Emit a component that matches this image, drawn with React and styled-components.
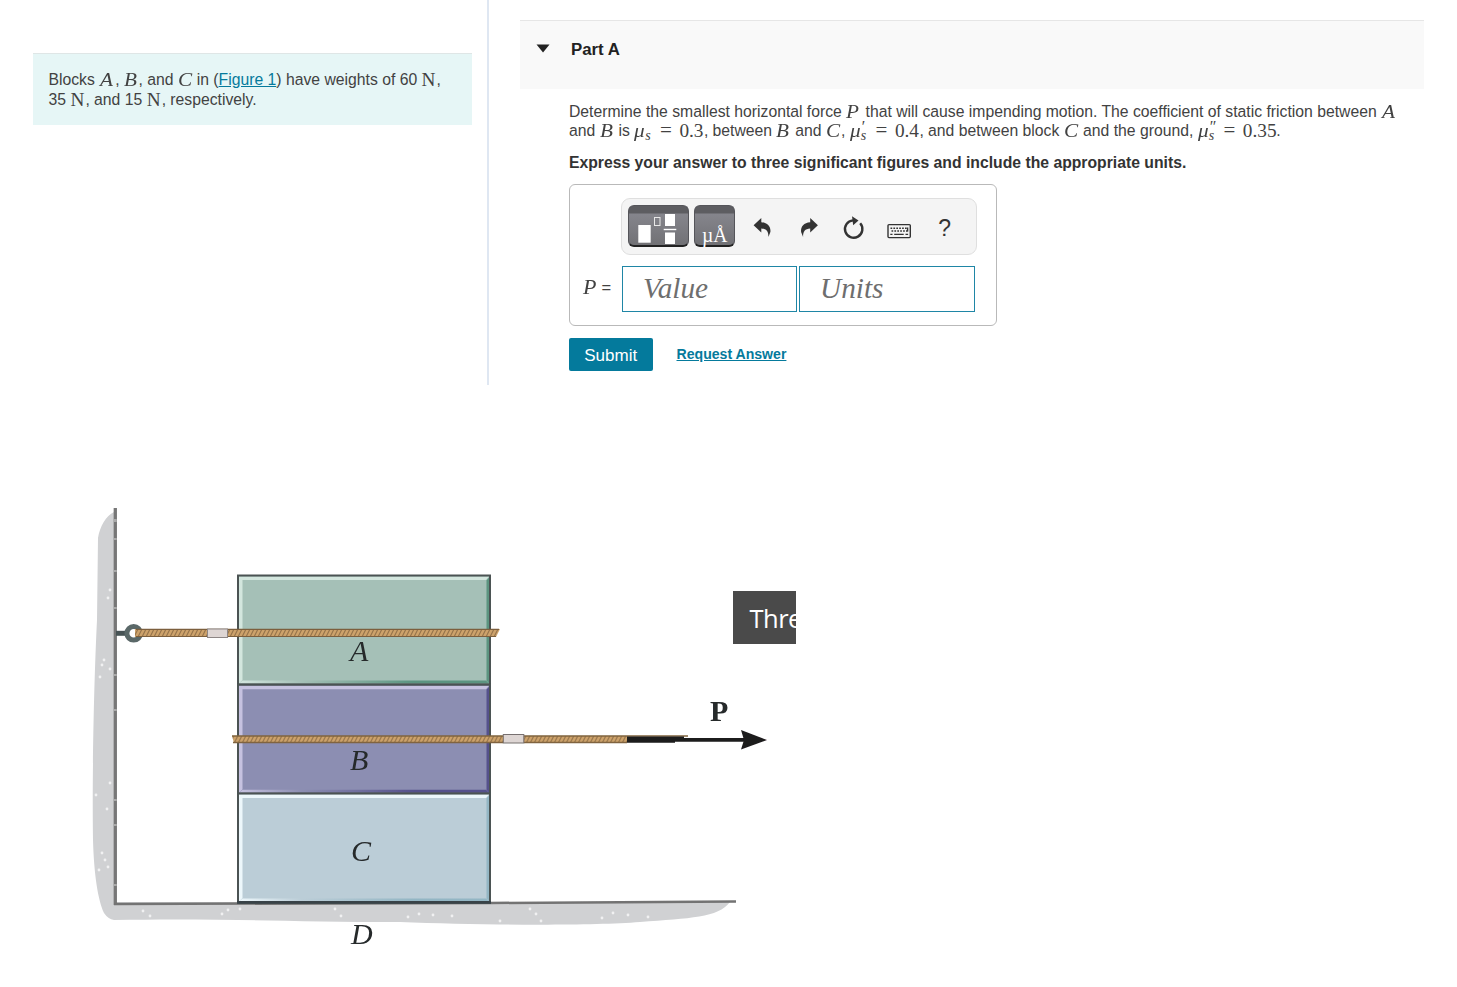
import React, { useState } from 'react';
import styled, { createGlobalStyle } from 'styled-components';

const GlobalStyle = createGlobalStyle`
  * {
    box-sizing: border-box;
  }
  body {
    margin: 0;
    background: #fff;
    font-family: "Liberation Sans", Arial, sans-serif;
    color: #424242;
  }
`;

const Page = styled.div`
  width: 1457px;
  height: 987px;
  display: flex;
  flex-direction: column;
  overflow: hidden;
`;

const Columns = styled.div`
  display: flex;
  height: 385px;
`;

const ProblemColumn = styled.aside`
  width: 489px;
  padding: 53px 15px 0 33px;
  border-right: 2px solid #dfe7f2;
`;

const ProblemCard = styled.div`
  height: 72px;
  padding: 16px 0 0 15.5px;
  background: #e6f6f6;
  border-top: 1px solid #dfe6e6;
`;

const TextLine = styled.p`
  margin: 0;
  height: 19.7px;
  line-height: 19.7px;
  font-size: 15.74px;
  white-space: nowrap;
`;

const Strong = styled(TextLine)`
  margin-top: 12.4px;
  font-weight: bold;
  color: #333;
`;

const Sym = styled.span`
  display: inline-block;
  width: ${props => props.$w}px;
  padding-left: ${props => props.$pad || 0}px;
  line-height: 0.8;
  vertical-align: -1px;
  font-family: "Liberation Serif", "Times New Roman", serif;
  font-size: ${props => props.$size || 19.3}px;
  font-style: ${props => (props.$upright ? 'normal' : 'italic')};
  transform: ${props => (props.$upright ? 'none' : 'scaleX(1.1)')};
  transform-origin: left;
`;

const Scripts = styled.span`
  display: inline-flex;
  flex-direction: column;
  width: 8.4px;
  vertical-align: 4px;
  font-family: "Liberation Serif", "Times New Roman", serif;
  font-style: italic;
  font-size: 14px;
  line-height: 9px;
`;

const Prime = styled.span`
  font-size: 16px;
  line-height: 8px;
`;

const Link = styled.a`
  color: #057a9c;
  text-decoration: underline;
  cursor: pointer;
`;

const PartColumn = styled.main`
  width: 935px;
  padding: 20px 0 0 31px;
`;

const PartHeader = styled.header`
  display: flex;
  align-items: flex-start;
  height: 69px;
  padding: 19px 0 0 16px;
  background: #f9f9f9;
  border-top: 1px solid #e6e6e6;
`;

const PartTitle = styled.h2`
  margin: 0 0 0 21px;
  font-size: 16.8px;
  line-height: 20px;
  color: #222;
`;

const Caret = styled.svg`
  width: 14px;
  height: 9px;
  margin-top: 4px;
`;

const PartBody = styled.div`
  padding: 12.6px 0 0 49px;
`;

const AnswerBox = styled.div`
  width: 428px;
  height: 142px;
  margin-top: 11px;
  padding: 13px 19px 0 13px;
  border: 1px solid #b9b9b9;
  border-radius: 6px;
`;

const Toolbar = styled.div`
  display: flex;
  align-items: flex-start;
  width: 356px;
  height: 57px;
  margin-left: 38px;
  padding: 6px 0 0 6px;
  background: #f4f4f4;
  border: 1px solid #dfdfdf;
  border-radius: 9px;
`;

const PaletteButton = styled.button`
  flex: none;
  width: ${props => props.$w}px;
  height: 42px;
  margin-right: 5px;
  padding: 0;
  border: 1px solid #55555a;
  border-bottom: 2px solid #222;
  border-radius: 6px;
  background: linear-gradient(#5d5d61 0 7px, #85858c 8px, #717175 100%);
`;

const IconButton = styled.button`
  flex: none;
  width: 46px;
  height: 42px;
  padding: 0;
  border: 0;
  background: none;
`;

const Icon = styled.svg`
  display: block;
  overflow: visible;
`;

const FieldRow = styled.div`
  display: flex;
  align-items: center;
  height: 46px;
  margin-top: 11px;
`;

const FieldLabel = styled.label`
  width: 39px;
  padding-bottom: 3px;
  font-size: 16.5px;
`;

const Field = styled.input`
  width: ${props => props.$w}px;
  height: 46px;
  margin-right: 2px;
  padding: 0 0 2px 20px;
  border: 1px solid #1f86a6;
  border-radius: 0;
  background: #fff;
  font: italic 29.3px "Liberation Serif", "Times New Roman", serif;
  &::placeholder {
    color: #6e6e6e;
    opacity: 1;
  }
`;

const Actions = styled.div`
  display: flex;
  align-items: center;
  margin-top: 12px;
`;

const Submit = styled.button`
  width: 83.5px;
  height: 33px;
  margin-right: 24px;
  padding: 2px 0 0;
  border: 0;
  border-radius: 2px;
  background: #047a9c;
  color: #fff;
  font: 17px "Liberation Sans", Arial, sans-serif;
`;

const RequestLink = styled(Link)`
  padding-bottom: 2px;
  font-size: 14.1px;
  font-weight: bold;
`;

const FigureArea = styled.section`
  position: relative;
  height: 602px;
  padding: 105px 0 0 80px;
`;

const Drawing = styled.svg`
  display: block;
  width: 700px;
  height: 480px;
`;

const Tip = styled.div`
  position: absolute;
  left: 733px;
  top: 206px;
  width: 63px;
  height: 53px;
  padding-left: 16.5px;
  overflow: hidden;
  background: #4a4a4a;
  color: #fff;
  font: 25.5px/55px "Open Sans", "Noto Sans", sans-serif;
  letter-spacing: -0.5px;
  white-space: nowrap;
`;

const ICON = '#333';

const TemplateIcon = () => (
  <Icon width="59" height="39" viewBox="0 0 59 39">
    <rect x="9.3" y="19" width="12.4" height="17.7" fill="#fff" />
    <rect x="25.5" y="11.5" width="5.5" height="8" fill="none" stroke="#e8e8e8" />
    <rect x="36" y="8" width="10" height="12" fill="#fff" />
    <path d="M34.7 23.5h12.6" stroke="#fff" strokeWidth="1.4" />
    <rect x="36" y="26.5" width="10" height="11.5" fill="#fff" />
  </Icon>
);

const UnitsIcon = () => (
  <Icon width="39" height="39" viewBox="0 0 39 39">
    <text x="7" y="36" fill="#fff" fontSize="22" fontFamily="Liberation Serif, serif" textLength="25.5" lengthAdjust="spacingAndGlyphs">µÅ</text>
  </Icon>
);

const ArrowIcon = ({ flip }) => (
  <Icon width="46" height="42" viewBox="0 0 46 42">
    <path
      transform={flip ? 'translate(45.5 0) scale(-1 1)' : undefined}
      d="M13.6 20.3L21.3 13V17.2C27.5 17.5 31 21.5 30.4 27L28.4 32C28.6 26.5 26.5 23.7 21.3 23.5V27.6Z"
      fill={ICON}
    />
  </Icon>
);

const ResetIcon = () => (
  <Icon width="46" height="42" viewBox="0 0 46 42">
    <path d="M28.2 18.3A8.7 8.7 0 1 1 21 15.4" fill="none" stroke={ICON} strokeWidth="2.4" />
    <path d="M20 11.3L26.5 15.6L21.2 20.3Z" fill={ICON} />
  </Icon>
);

const KeyboardIcon = () => (
  <Icon width="46" height="42" viewBox="0 0 46 42">
    <rect x="10" y="19.6" width="22.3" height="13" rx="1" fill="none" stroke={ICON} strokeWidth="1.4" />
    <path d="M12.5 23.2h17.5M13.5 25.9h16" stroke={ICON} strokeWidth="1.5" strokeDasharray="1.7 1.2" />
    <path d="M12.3 29.4h2.2M16.2 29.4h9.5M27.5 29.4h2.6M29.6 22.5v4" stroke={ICON} strokeWidth="1.4" />
  </Icon>
);

const HelpIcon = () => (
  <Icon width="46" height="42" viewBox="0 0 46 42">
    <text x="20.6" y="31" textAnchor="middle" fontSize="23" fontFamily="Liberation Sans, Arial, sans-serif" fill={ICON}>?</text>
  </Icon>
);

const BLOCKS = [
  { name: 'A', y: 575.5, x: 350, base: 661, fill: '#a5c0b7', light: '#d3e6de', dark: '#5b9480' },
  { name: 'B', y: 684.7, x: 350, base: 770, fill: '#8c8eb2', light: '#c6c2e0', dark: '#55518c' },
  { name: 'C', y: 793.5, x: 351, base: 861, fill: '#bbcdd7', light: '#edf7fb', dark: '#93b6c4' },
];

const WALL_SPECKS = [
  [110, 590], [108, 598], [104, 660], [102, 665], [110, 669], [100, 677],
  [110, 783], [96, 795], [107, 809], [102, 853], [105, 860], [108, 867], [99, 870],
];

const GROUND_SPECKS = [
  [143, 911], [150, 916], [222, 914], [228, 910], [240, 909], [335, 909],
  [341, 916], [408, 917], [419, 914], [433, 915], [452, 916], [500, 921],
  [530, 909], [536, 914], [541, 921], [602, 918], [613, 913], [628, 915], [648, 917],
];

const Block = ({ name, y, fill, light, dark }) => (
  <g>
    <linearGradient id={`bevel${name}`}>
      <stop offset="0" stopColor={light} />
      <stop offset="0.25" stopColor={fill} />
      <stop offset="0.7" stopColor={dark} />
      <stop offset="1" stopColor={dark} />
    </linearGradient>
    <rect x="238" y={y} width="252" height="109" fill={fill} />
    <path d={`M239 ${y + 108}V${y + 1}H489L486 ${y + 4.5}H242.5V${y + 104.5}Z`} fill={light} />
    <path d={`M239 ${y + 108}L242.5 ${y + 105}H486L489 ${y + 108}Z`} fill={`url(#bevel${name})`} />
    <path d={`M489 ${y + 2}V${y + 108}L486.5 ${y + 105}V${y + 5}Z`} fill={dark} />
    <rect x="238" y={y} width="252" height="109" fill="none" stroke="#4b5252" strokeWidth="2" />
  </g>
);

const RopePattern = ({ id, y }) => (
  <pattern id={id} width="4" height="8" patternUnits="userSpaceOnUse" y={y}>
    <rect width="4" height="8" fill="#cda26b" />
    <path d="M-2 8L2 0M2 8L6 0" stroke="#94734a" strokeWidth="1.1" />
  </pattern>
);

const Figure = () => (
  <Drawing viewBox="80 490 700 480">
    <defs>
      <RopePattern id="ropeA" y="629" />
      <RopePattern id="ropeB" y="735.5" />
      <filter id="soft" x="-5%" y="-5%" width="110%" height="110%">
        <feGaussianBlur stdDeviation="0.7" />
      </filter>
    </defs>
    <g filter="url(#soft)">
      <path
        d="M114 512C106 516 100 526 98 538L97 620C94 680 92 780 93 840C94 875 98 900 104 913Q108 919 114 920C220 918 290 922 400 922C480 925 590 926 640 922C690 918 718 918 730 902H114Z"
        fill="#d0d1d3"
      />
      {WALL_SPECKS.concat(GROUND_SPECKS).map(([cx, cy]) => (
        <circle key={`${cx}-${cy}`} cx={cx} cy={cy} r="1.4" fill="#f1f1f2" />
      ))}
      <path d="M115.3 508V905" stroke="#777" strokeWidth="3.3" />
      <path d="M114 904L490 903L736 901.5" fill="none" stroke="#737373" strokeWidth="2.5" />
      <path d="M115.3 519V522M115.3 538V540M115.3 570V572M115.3 607V609M115.3 674V676M115.3 709V711M115.3 799V801M115.3 824V826M115.3 884V886" stroke="#aaa" strokeWidth="3" />
      {BLOCKS.map(block => (
        <Block key={block.name} {...block} />
      ))}
      <path d="M237 902.3H491" stroke="#384247" strokeWidth="2.8" />

      {/* wall ring and the rope around block A */}
      <path d="M116 633.3H126" stroke="#465354" strokeWidth="5" />
      <circle cx="133.7" cy="633.3" r="6.8" fill="#fff" stroke="#5a6768" strokeWidth="5" />
      <path d="M135 629H500L496 637H135Z" fill="url(#ropeA)" />
      <path d="M136 629.3H499M136 636.5H496" stroke="#7c5f3d" strokeWidth="1.2" />
      <rect x="207.5" y="629" width="20" height="8.5" fill="#ded6d4" stroke="#8d8685" />

      {/* rope around block B, pulled by P */}
      <path d="M232 736H504V743H234Z" fill="url(#ropeB)" />
      <path d="M523 736H627V743H523Z" fill="url(#ropeB)" />
      <path d="M232 736H503M233 742.5H503M524 736H688M524 742.5H627" stroke="#80643f" strokeWidth="1.3" />
      <rect x="503.3" y="734.5" width="20.5" height="8.5" fill="#ded6d4" stroke="#77706f" />
      <path d="M627 736.5H684V738H745V741.7H675V742.7H627Z" fill="#1d1b1b" />
      <path d="M741 730L767 740L741 749.5L744 740Z" fill="#1c1a1b" />

      <g fontFamily="Liberation Serif, Times New Roman, serif" fontSize="30" fill="#25292b">
        {BLOCKS.map(block => (
          <text key={block.name} x={block.x} y={block.base} fontStyle="italic">{block.name}</text>
        ))}
        <text x="351" y="944" fontStyle="italic">D</text>
        <text x="710" y="721" fontWeight="bold">P</text>
      </g>
    </g>
  </Drawing>
);

const Mu = ({ prime }) => (
  <>
    <Sym $w={11}>μ</Sym>
    <Scripts>
      <Prime>{prime || '\u00a0'}</Prime>
      <span>s</span>
    </Scripts>
  </>
);

const Equals = () => <Sym $w={17} $pad={2} $size={21} $upright>=</Sym>;

const App = () => {
  const [value, setValue] = useState('');
  const [units, setUnits] = useState('');

  return (
    <Page>
      <GlobalStyle />
      <Columns>
        <ProblemColumn>
          <ProblemCard>
            <TextLine>
              Blocks <Sym $w={16} $pad={1}>A</Sym>, <Sym $w={14.5}>B</Sym>, and <Sym $w={14.5}>C</Sym> in (<Link>Figure 1</Link>) have weights of 60 <Sym $w={15} $upright>N</Sym>,
            </TextLine>
            <TextLine>
              35 <Sym $w={15} $upright>N</Sym>, and 15 <Sym $w={15} $upright>N</Sym>, respectively.
            </TextLine>
          </ProblemCard>
        </ProblemColumn>
        <PartColumn>
          <PartHeader>
            <Caret viewBox="0 0 14 9">
              <path d="M0.5 0.5H13.5L7 8.5Z" fill="#222" />
            </Caret>
            <PartTitle>Part A</PartTitle>
          </PartHeader>
          <PartBody>
            <TextLine>
              Determine the smallest horizontal force <Sym $w={15}>P</Sym> that will cause impending motion. The coefficient of static friction between <Sym $w={14} $pad={1}>A</Sym>
            </TextLine>
            <TextLine>
              and <Sym $w={14.5}>B</Sym> is <Mu /> <Equals /> <Sym $w={24.5} $upright>0.3</Sym>, between <Sym $w={14.5}>B</Sym> and <Sym $w={15}>C</Sym>, <Mu prime="′" /> <Equals /> <Sym $w={24.5} $upright>0.4</Sym>, and between block <Sym $w={15}>C</Sym> and the ground, <Mu prime="″" /> <Equals /> <Sym $w={33.5} $upright>0.35</Sym>.
            </TextLine>
            <Strong>Express your answer to three significant figures and include the appropriate units.</Strong>
            <AnswerBox>
              <Toolbar>
                <PaletteButton $w={61} aria-label="Templates"><TemplateIcon /></PaletteButton>
                <PaletteButton $w={41} aria-label="Symbols"><UnitsIcon /></PaletteButton>
                <IconButton aria-label="Undo"><ArrowIcon /></IconButton>
                <IconButton aria-label="Redo"><ArrowIcon flip /></IconButton>
                <IconButton aria-label="Reset"><ResetIcon /></IconButton>
                <IconButton aria-label="Keyboard"><KeyboardIcon /></IconButton>
                <IconButton aria-label="Help"><HelpIcon /></IconButton>
              </Toolbar>
              <FieldRow>
                <FieldLabel><Sym $w={14} $size={20}>P</Sym> =</FieldLabel>
                <Field $w={175} placeholder="Value" value={value} onChange={e => setValue(e.target.value)} />
                <Field $w={176} placeholder="Units" value={units} onChange={e => setUnits(e.target.value)} />
              </FieldRow>
            </AnswerBox>
            <Actions>
              <Submit>Submit</Submit>
              <RequestLink>Request Answer</RequestLink>
            </Actions>
          </PartBody>
        </PartColumn>
      </Columns>
      <FigureArea>
        <Figure />
        <Tip>Three</Tip>
      </FigureArea>
    </Page>
  );
};

export default App;
